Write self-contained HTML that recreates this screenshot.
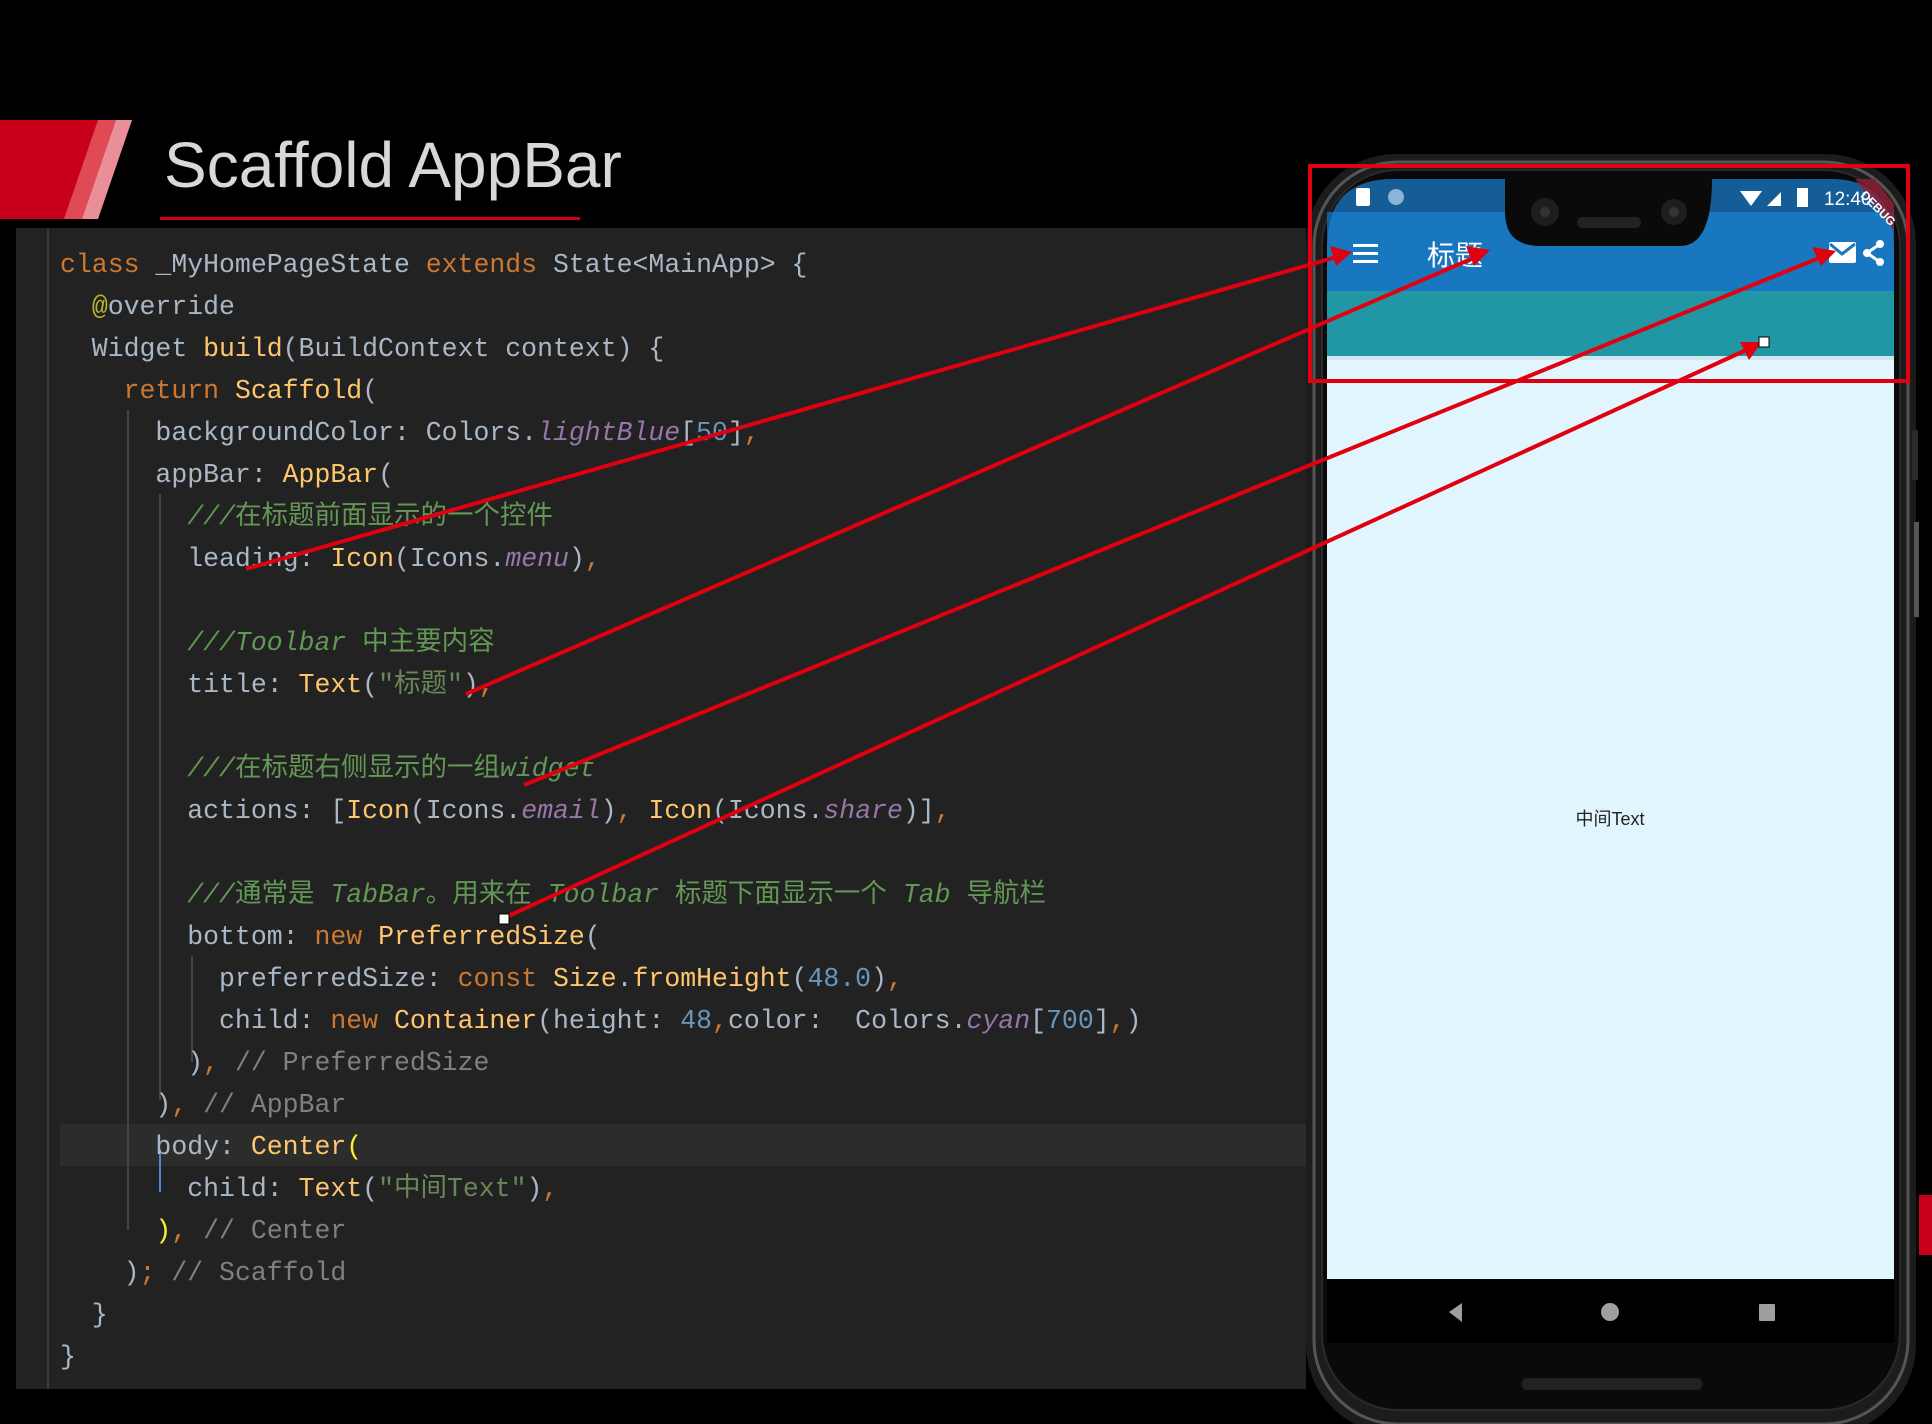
<!DOCTYPE html>
<html><head><meta charset="utf-8"><style>
html,body{margin:0;padding:0;background:#000;width:1932px;height:1424px;overflow:hidden;}
body{position:relative;font-family:"Liberation Sans","Noto Sans CJK SC",sans-serif;}
.title{position:absolute;left:164px;top:125px;font-size:64px;color:#d8d8d8;font-family:"Liberation Sans",sans-serif;line-height:80px;}
.panel{position:absolute;left:16px;top:228px;width:1290px;height:1161px;background:#222222;}
.code{position:absolute;left:0;top:244px;font-family:"Liberation Mono","Noto Sans CJK SC",monospace;font-size:26.5px;color:#a9b7c6;}
.l{height:42px;line-height:42px;padding-left:60px;white-space:pre;overflow:hidden;}
.k{color:#cc7832}.f{color:#ffc66d}.p{color:#9876aa;font-style:italic}.n{color:#6897bb}.c{color:#629755}.c i{font-style:italic}.g{color:#808080}.s{color:#6a8759}.a{color:#bbb529}
.hl{position:absolute;left:60px;top:1124px;width:1246px;height:42px;background:#2c2c2c;}
</style></head><body>
<svg width="1932" height="1424" style="position:absolute;left:0;top:0">
<polygon points="0,120 132,120 98,219 0,219" fill="#c8001a"/>
<polygon points="98,120 116,120 82,219 64,219" fill="#e04a55"/>
<polygon points="116,120 132,120 98,219 82,219" fill="#e88f98"/>
<rect x="160" y="217" width="420" height="3" fill="#d00018"/>
</svg>
<div class="title">Scaffold AppBar</div>
<div class="panel"></div>
<div class="hl"></div>
<svg width="1932" height="1424" style="position:absolute;left:0;top:0">
<line x1="48" y1="228" x2="48" y2="1389" stroke="#3a3a3a" stroke-width="2"/>
<line x1="128" y1="410" x2="128" y2="1230" stroke="#444" stroke-width="2"/>
<line x1="160" y1="494" x2="160" y2="1100" stroke="#444" stroke-width="2"/>
<line x1="192" y1="956" x2="192" y2="1062" stroke="#444" stroke-width="2"/>
<line x1="160" y1="1150" x2="160" y2="1192" stroke="#4a88d0" stroke-width="2"/>
</svg>
<div class="code"><div class="l"><span class="k">class</span> _MyHomePageState <span class="k">extends</span> State&lt;MainApp&gt; {</div><div class="l">  <span class="a">@</span>override</div><div class="l">  Widget <span class="f">build</span>(BuildContext context) {</div><div class="l">    <span class="k">return</span> <span class="f">Scaffold</span>(</div><div class="l">      backgroundColor: Colors.<span class="p">lightBlue</span>[<span class="n">50</span>]<span class="k">,</span></div><div class="l">      appBar: <span class="f">AppBar</span>(</div><div class="l">        <span class="c"><i>///</i>在标题前面显示的一个控件</span></div><div class="l">        leading: <span class="f">Icon</span>(Icons.<span class="p">menu</span>)<span class="k">,</span></div><div class="l"> </div><div class="l">        <span class="c"><i>///Toolbar</i> 中主要内容</span></div><div class="l">        title: <span class="f">Text</span>(<span class="s">"标题"</span>)<span class="k">,</span></div><div class="l"> </div><div class="l">        <span class="c"><i>///</i>在标题右侧显示的一组<i>widget</i></span></div><div class="l">        actions: [<span class="f">Icon</span>(Icons.<span class="p">email</span>)<span class="k">,</span> <span class="f">Icon</span>(Icons.<span class="p">share</span>)]<span class="k">,</span></div><div class="l"> </div><div class="l">        <span class="c"><i>///</i>通常是 <i>TabBar</i>。用来在 <i>Toolbar</i> 标题下面显示一个 <i>Tab</i> 导航栏</span></div><div class="l">        bottom: <span class="k">new</span> <span class="f">PreferredSize</span>(</div><div class="l">          preferredSize: <span class="k">const</span> <span class="f">Size</span>.<span class="f">fromHeight</span>(<span class="n">48.0</span>)<span class="k">,</span></div><div class="l">          child: <span class="k">new</span> <span class="f">Container</span>(height: <span class="n">48</span><span class="k">,</span>color:  Colors.<span class="p">cyan</span>[<span class="n">700</span>]<span class="k">,</span>)</div><div class="l">        )<span class="k">,</span> <span class="g">// PreferredSize</span></div><div class="l">      )<span class="k">,</span> <span class="g">// AppBar</span></div><div class="l">      body: <span class="f">Center</span><span style="color:#ffef28">(</span></div><div class="l">        child: <span class="f">Text</span>(<span class="s">"中间Text"</span>)<span class="k">,</span></div><div class="l">      <span style="color:#ffef28">)</span><span class="k">,</span> <span class="g">// Center</span></div><div class="l">    )<span class="k">;</span> <span class="g">// Scaffold</span></div><div class="l">  }</div><div class="l">}</div></div>
<svg width="1932" height="1424" style="position:absolute;left:0;top:0">
<rect x="1919" y="1195" width="13" height="60" fill="#c8001a"/>
<rect x="1306" y="154" width="610" height="1280" rx="90" fill="#1c1c1c"/>
<rect x="1314" y="162" width="594" height="1262" rx="84" fill="none" stroke="#555" stroke-width="3"/>
<rect x="1322" y="170" width="578" height="1240" rx="76" fill="#0a0a0a" stroke="#2a2a2a" stroke-width="2"/>
<rect x="1912" y="430" width="6" height="50" fill="#2a2a2a"/>
<rect x="1914" y="522" width="5" height="95" fill="#555"/>
<path d="M1327,246 Q1327,179 1394,179 L1830,179 Q1894,179 1894,246 L1894,1343 L1327,1343 Z" fill="#000"/>
<path d="M1327,246 Q1327,179 1394,179 L1830,179 Q1894,179 1894,246 L1894,291 L1327,291 Z" fill="#1977bf"/>
<path d="M1327,212 L1327,246 Q1327,179 1394,179 L1830,179 Q1894,179 1894,246 L1894,212 Z" fill="#155d96"/>
<rect x="1327" y="291" width="567" height="65" fill="#2196a4"/>
<rect x="1327" y="356" width="567" height="923" fill="#e1f5fe"/>
<rect x="1327" y="356" width="567" height="4" fill="#cfe6ef"/>
<path d="M1505,179 L1712,179 Q1712,246 1680,246 L1540,246 Q1505,246 1505,212 Z" fill="#0a0a0a"/>
<circle cx="1545" cy="212" r="14" fill="#1e1e1e"/><circle cx="1545" cy="212" r="5" fill="#333"/>
<circle cx="1674" cy="212" r="13" fill="#1e1e1e"/><circle cx="1674" cy="212" r="5" fill="#333"/>
<rect x="1577" y="217" width="64" height="11" rx="5" fill="#222"/>
<rect x="1356" y="188" width="14" height="18" rx="2" fill="#fff"/>
<circle cx="1396" cy="197" r="8" fill="#8ab4d8"/>
<path d="M1740,191 L1762,191 L1751,206 Z" fill="#fff"/>
<path d="M1767,206 L1781,192 L1781,206 Z" fill="#fff"/>
<rect x="1797" y="188" width="11" height="19" fill="#fff"/>
<text x="1824" y="205" font-size="19" fill="#fff" font-family="Liberation Sans">12:40</text>
<rect x="1353" y="244" width="25" height="3" fill="#fff"/><rect x="1353" y="252" width="25" height="3" fill="#fff"/><rect x="1353" y="260" width="25" height="3" fill="#fff"/>
<text x="1427" y="265" font-size="28" fill="#fff" font-family="Noto Sans CJK SC">标题</text>
<rect x="1829" y="242" width="27" height="21" rx="2" fill="#fff"/>
<path d="M1830,244 L1842,254 L1855,244" stroke="#1977bf" stroke-width="3" fill="none"/>
<path d="M1880,244 L1867,253 L1880,262" stroke="#fff" stroke-width="3" fill="none"/>
<circle cx="1880" cy="244" r="4" fill="#fff"/><circle cx="1867" cy="253" r="4" fill="#fff"/><circle cx="1880" cy="262" r="4" fill="#fff"/>
<path d="M1855,179 L1875,179 L1894,204 L1894,230 Z" fill="#8b2035" opacity="0.85"/>
<text x="0" y="0" font-size="12" font-weight="bold" fill="#fff" transform="translate(1860,196) rotate(45)" font-family="Liberation Sans">DEBUG</text>
<text x="1610" y="825" font-size="18" fill="#222" text-anchor="middle" font-family="Liberation Sans, Noto Sans CJK SC">中间Text</text>
<path d="M1449,1312 L1462,1303 L1462,1322 Z" fill="#9e9e9e"/>
<circle cx="1610" cy="1312" r="9" fill="#9e9e9e"/>
<rect x="1759" y="1304" width="16" height="17" rx="1" fill="#9e9e9e"/>
<rect x="1522" y="1378" width="180" height="12" rx="5" fill="#222"/>
<rect x="1310" y="166" width="598" height="215" fill="none" stroke="#e00010" stroke-width="4"/>
<g stroke="#e00010" stroke-width="4" fill="none">
<line x1="246" y1="569" x2="1340" y2="256"/>
<line x1="466" y1="694" x2="1478" y2="256"/>
<line x1="524" y1="785" x2="1824" y2="256"/>
<line x1="504" y1="918" x2="1755" y2="346"/>
</g>
<g fill="#e00010">
<polygon points="1352,252 1330,246 1336,266"/>
<polygon points="1490,250 1466,246 1474,266"/>
<polygon points="1836,251 1812,247 1821,266"/>
<polygon points="1762,342 1740,342 1749,360"/>
</g>
<rect x="499" y="914" width="10" height="10" fill="#fff" stroke="#000" stroke-width="1"/>
<rect x="1759" y="337" width="10" height="10" fill="#fff" stroke="#000" stroke-width="1"/>
</svg>
</body></html>
